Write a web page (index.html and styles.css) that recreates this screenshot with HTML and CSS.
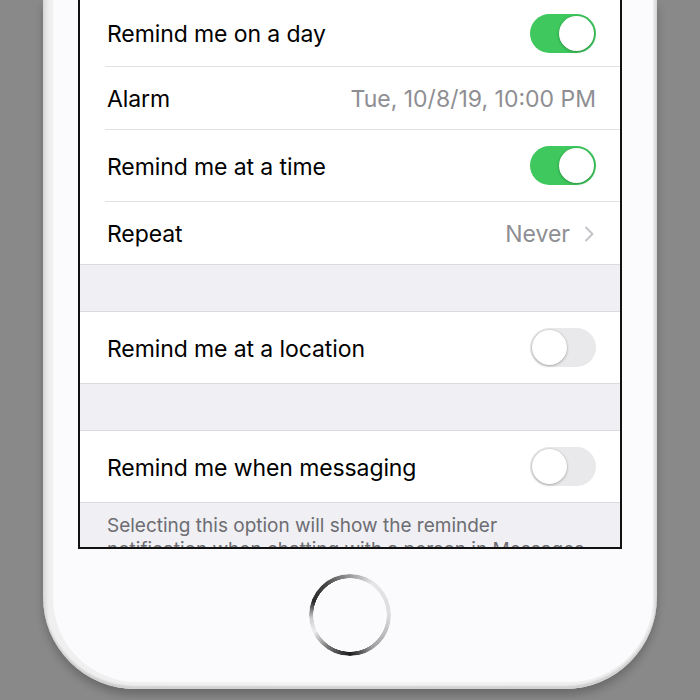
FILE: index.html
```html
<!DOCTYPE html>
<html lang="en">
<head>
<meta charset="utf-8">
<title>Reminder details</title>
<link rel="stylesheet" href="styles.css">
</head>
<body>
<div class="stage">
  <div class="phone">
    <div class="face">
      <div class="screen">
        <div class="group">
          <div class="row tall">
            <span class="label">Remind me on a day</span>
            <span class="switch on"><span class="knob"></span></span>
          </div>
          <div class="row">
            <span class="label">Alarm</span>
            <span class="value">Tue, 10/8/19, 10:00 PM</span>
          </div>
          <div class="row tall">
            <span class="label">Remind me at a time</span>
            <span class="switch on"><span class="knob"></span></span>
          </div>
          <div class="row last">
            <span class="label">Repeat</span>
            <span class="value">Never<svg class="chevron" width="10" height="18" viewBox="0 0 10 18"><path d="M2 2.5l6.5 6.5-6.5 6.5" fill="none" stroke="#c4c4c8" stroke-width="2" stroke-linecap="round" stroke-linejoin="round"/></svg></span>
          </div>
        </div>
        <div class="spacer"></div>
        <div class="group">
          <div class="row tall last">
            <span class="label">Remind me at a location</span>
            <span class="switch"><span class="knob"></span></span>
          </div>
        </div>
        <div class="spacer"></div>
        <div class="group">
          <div class="row tall last">
            <span class="label">Remind me when messaging</span>
            <span class="switch"><span class="knob"></span></span>
          </div>
        </div>
        <p class="footnote">Selecting this option will show the reminder notification when chatting with a person in Messages.</p>
      </div>
      <div class="home"><span class="home-ring"></span></div>
    </div>
  </div>
</div>
</body>
</html>
```

FILE: styles.css
```css
html, body {
  margin: 0;
  padding: 0;
  height: 100%;
  overflow: hidden;
}

body {
  background: #898989;
  font-family: Inter, "Noto Sans", sans-serif;
}

.stage {
  padding-left: 43px;
}

/* handset body with its metal rim */
.phone {
  width: 614px;
  height: 689px;
  box-sizing: border-box;
  padding: 0 4px 7px 10px;
  border-radius: 0 0 92px 92px;
  background: linear-gradient(to right, #d8d8d8 0, #efefef 6px, #f4f4f4 50%, #eeeeee calc(100% - 4px), #d6d6d6 100%);
  box-shadow: 0 6px 8px rgba(0, 0, 0, 0.22), inset 0 -3px 2px #d0d0d0;
}

.face {
  height: 100%;
  background: #fbfbfd;
  border-radius: 0 0 84px 84px;
  padding: 0 31px 0 25px;
  box-sizing: border-box;
  display: flex;
  flex-direction: column;
  align-items: center;
}

.screen {
  width: 544px;
  height: 549px;
  box-sizing: border-box;
  border: 2px solid #111;
  border-top: none;
  background: #efeff4;
  overflow: hidden;
  flex: none;
}

.group {
  background: #fff;
  border-top: 1px solid #dcdce0;
  border-bottom: 1px solid #dcdce0;
}

.group:first-child {
  border-top: none;
}

.row {
  height: 63px;
  margin-left: 25px;
  padding: 0 24px 0 2px;
  display: flex;
  align-items: center;
  justify-content: space-between;
  border-bottom: 1px solid #e2e2e5;
  box-sizing: border-box;
}

.row.tall {
  height: 72px;
}

.group:first-child .row:first-child {
  height: 67px;
}

.row.last {
  border-bottom: none;
  height: 62px;
}

.row.tall.last {
  height: 71px;
}

.label {
  font-size: 23px;
  color: #000;
  letter-spacing: -0.1px;
  padding-top: 2px;
}

.value {
  font-size: 23px;
  color: #8e8e93;
  display: flex;
  align-items: center;
  gap: 14px;
  padding-top: 2px;
}

.chevron {
  margin-right: 2px;
}

.spacer {
  height: 46px;
}

/* iOS style switch */
.switch {
  position: relative;
  width: 66px;
  height: 39px;
  border-radius: 20px;
  background: #e9e9eb;
  flex: none;
}

.switch.on {
  background: #3ec85d;
}

.knob {
  position: absolute;
  top: 2px;
  left: 2px;
  width: 35px;
  height: 35px;
  border-radius: 50%;
  background: #fff;
  box-shadow: 0 1px 3px rgba(0, 0, 0, 0.25), 0 0 0 0.5px rgba(0, 0, 0, 0.08);
}

.switch.on .knob {
  left: 29px;
}

.footnote {
  margin: 0;
  padding: 11px 20px 0 27px;
  font-size: 19px;
  line-height: 24px;
  color: #6d6d72;
}

.home {
  margin-top: 25px;
  width: 82px;
  height: 82px;
}

.home-ring {
  display: block;
  width: 82px;
  height: 82px;
  border-radius: 50%;
  background: conic-gradient(#9a9a9a 0deg, #e6e6e6 35deg, #dcdcdc 90deg, #a0a0a0 145deg, #1a1a1a 180deg, #777 215deg, #eeeeee 245deg, #cfcfcf 265deg, #2a2a2a 290deg, #444 320deg, #9a9a9a 360deg);
  -webkit-mask: radial-gradient(circle, transparent 36.5px, #000 37px);
  mask: radial-gradient(circle, transparent 36.5px, #000 37px);
}
```
